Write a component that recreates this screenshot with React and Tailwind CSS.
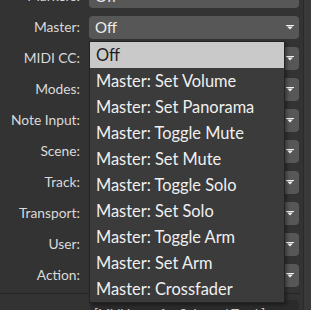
import React from 'react';

const labels = ['Markers:', 'Master:', 'MIDI CC:', 'Modes:', 'Note Input:', 'Scene:', 'Track:', 'Transport:', 'User:', 'Action:'];

const options = [
    'Off',
    'Master: Set Volume',
    'Master: Set Panorama',
    'Master: Toggle Mute',
    'Master: Set Mute',
    'Master: Toggle Solo',
    'Master: Set Solo',
    'Master: Toggle Arm',
    'Master: Set Arm',
    'Master: Crossfader',
];

const Arrow = () => (
    <svg width="8" height="5" viewBox="0 0 8 5" className="shrink-0">
        <rect x="0" y="0" width="8" height="1" fill="#f2f2f2" />
        <polygon points="1,1.5 7,1.5 4,4.5" fill="#f2f2f2" />
    </svg>
);

const Row = ({ label, value }) => (
    <div className="flex items-center h-[31px]">
        <div className="w-[80px] text-right text-[13.8px] text-[#dadada]">{label}</div>
        <div className="ml-[9px] w-[210px] h-[23px] rounded-[4px] bg-[#575757] flex items-center justify-between pl-[6px] pr-[5px]">
            <span className="text-[15px] text-[#ededed]">{value}</span>
            <Arrow />
        </div>
    </div>
);

const App = () => {
    return (
        <div
            className="relative w-[311px] h-[310px] overflow-hidden bg-[#333333] flex"
            style={{ fontFamily: 'Lato, "Open Sans", sans-serif' }}
        >
            <div className="w-[303px] flex flex-col">
                <div className="-mt-[19px]">
                    {labels.map((label, i) => (
                        <Row key={label} label={label} value={i < 2 ? 'Off' : ''} />
                    ))}
                </div>
                <div className="mt-[2px] border-t border-[#262626] mr-[3px]" />
                <div className="flex items-start mt-[6px]">
                    <div className="w-[80px] text-right text-[13.8px] text-[#dadada] leading-none pt-[10px]">File:</div>
                    <div className="ml-[10px] w-[209px] h-[24px] rounded-[4px] bg-[#2b2b2b] pl-[4px] pt-[8px] text-[13px] text-[#c8c8c8] leading-none whitespace-nowrap overflow-hidden">
                        [Midi Input for Selected Track]
                    </div>
                </div>
            </div>
            <div className="flex-1 border-l border-[#2a2a2a] bg-[#393939]" />

            {/* open dropdown list */}
            <div className="absolute left-[89px] top-[41px] w-[196px] border border-[#232323] bg-[#3b3b3b] shadow-[2px_2px_3px_rgba(0,0,0,0.35)]">
                {options.map((opt, i) => (
                    <div
                        key={opt}
                        className={
                            i === 0
                                ? 'h-[26px] flex items-center pl-[6px] text-[16.4px] bg-[#c9c9c9] text-[#1e1e1e]'
                                : 'h-[26px] flex items-center pl-[6px] text-[16.4px] text-[#f0f0f0]'
                        }
                    >
                        {opt}
                    </div>
                ))}
            </div>
        </div>
    );
};

export default App;
